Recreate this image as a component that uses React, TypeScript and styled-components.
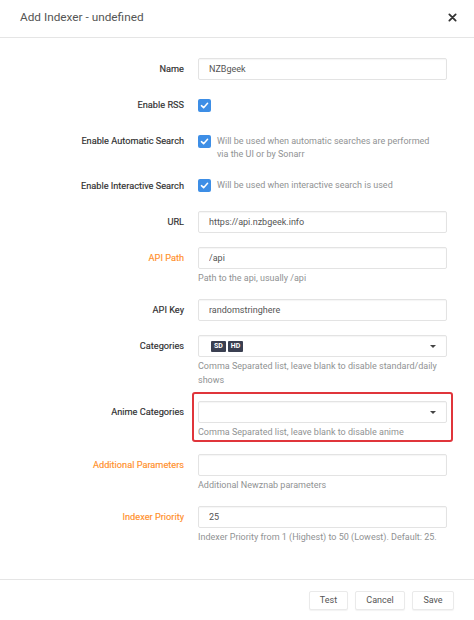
import React from "react";
import styled, { createGlobalStyle, css } from "styled-components";

const GlobalStyle = createGlobalStyle`
  html, body {
    margin: 0;
    padding: 0;
    background: #fff;
  }
  body {
    font-family: Roboto, "Open Sans", "Liberation Sans", sans-serif;
    -webkit-font-smoothing: antialiased;
  }
  * {
    box-sizing: border-box;
  }
`;

const Modal = styled.div`
  width: 474px;
  height: 620px;
  display: flex;
  flex-direction: column;
  background: #fff;
`;

const Header = styled.div`
  height: 38px;
  display: flex;
  align-items: center;
  justify-content: space-between;
  padding: 0 14px 3px 20px;
  border-bottom: 1px solid #e5e5e5;
`;

const Title = styled.h2`
  margin: 0;
  font-size: 11.8px;
  font-weight: 400;
  color: #555;
`;

const CloseButton = styled.button`
  width: 16px;
  height: 16px;
  padding: 0;
  border: none;
  background: none;
  display: flex;
  align-items: center;
  justify-content: center;
  cursor: pointer;
`;

const Body = styled.div`
  flex: 1;
  padding: 20px 27px 0 20px;
`;

const Group = styled.div`
  display: flex;
  align-items: flex-start;
  margin-bottom: 14px;
`;

const Label = styled.label<{ $advanced?: boolean }>`
  width: 164px;
  flex-shrink: 0;
  height: 22px;
  line-height: 22px;
  text-align: right;
  margin-right: 14px;
  font-size: 9.2px;
  font-weight: 400;
  color: ${(p) => (p.$advanced ? "#ff902b" : "#2f2f2f")};
  -webkit-text-stroke: 0.15px currentColor;
  white-space: nowrap;
`;

const Control = styled.div<{ $highlight?: boolean }>`
  flex: 1;
  position: relative;
  ${(p) =>
    p.$highlight &&
    css`
      &::after {
        content: "";
        position: absolute;
        top: -9px;
        left: -6px;
        right: -6px;
        bottom: -2px;
        border: 2px solid #e0353b;
        border-radius: 3px;
        pointer-events: none;
      }
    `}
`;

const inputBox = css`
  width: 100%;
  height: 22px;
  border: 1px solid #e3e3e3;
  border-radius: 2px;
  background: #fff;
  box-shadow: inset 0 1px 1px rgba(0, 0, 0, 0.04);
  font-family: inherit;
  font-size: 9px;
  color: #555;
`;

const TextInput = styled.input`
  ${inputBox};
  display: block;
  padding: 0 10px;
  outline: none;
`;

const SelectBox = styled.div`
  ${inputBox};
  display: flex;
  align-items: center;
  justify-content: space-between;
  padding: 0 10px 0 12px;
`;

const Tags = styled.div`
  display: flex;
  gap: 2px;
`;

const Tag = styled.span`
  height: 11px;
  padding: 0 3px;
  border-radius: 1px;
  background: #3a3f51;
  color: #fff;
  font-size: 7px;
  font-weight: 700;
  line-height: 11px;
`;

const Caret = styled.span`
  width: 0;
  height: 0;
  border-left: 3.5px solid transparent;
  border-right: 3.5px solid transparent;
  border-top: 3.5px solid #444;
`;

const Help = styled.div`
  margin-top: 3px;
  font-size: 9px;
  line-height: 13.5px;
  color: #909293;
`;

const CheckRow = styled.div`
  display: flex;
  align-items: flex-start;
`;

const CheckWrap = styled.div`
  height: 22px;
  display: flex;
  align-items: center;
  flex-shrink: 0;
`;

const CheckBox = styled.span`
  width: 13px;
  height: 13px;
  border-radius: 2px;
  background: #3d8ee6;
  display: flex;
  align-items: center;
  justify-content: center;
`;

const CheckHelp = styled.div`
  margin-left: 6px;
  padding-top: 4.5px;
  font-size: 9px;
  line-height: 13px;
  color: #909293;
  max-width: 222px;
`;

const Footer = styled.div`
  height: 41px;
  border-top: 1px solid #e5e5e5;
  display: flex;
  align-items: center;
  justify-content: flex-end;
  gap: 7px;
  padding: 0 20px 0 0;
`;

const Button = styled.button<{ $width: number }>`
  width: ${(p) => p.$width}px;
  height: 19px;
  padding: 0;
  border: 1px solid #eaeaea;
  border-radius: 2px;
  background: #fff;
  box-shadow: 0 1px 1px rgba(0, 0, 0, 0.05);
  font-family: inherit;
  font-size: 9px;
  color: #555;
  cursor: pointer;
`;

function Check() {
  return (
    <CheckBox>
      <svg width="9" height="9" viewBox="0 0 10 10">
        <path
          d="M1.6 5.2 L4 7.4 L8.4 2.6"
          fill="none"
          stroke="#fff"
          strokeWidth="1.7"
          strokeLinecap="round"
          strokeLinejoin="round"
        />
      </svg>
    </CheckBox>
  );
}

interface FieldProps {
  label: string;
  advanced?: boolean;
  help?: string;
  highlight?: boolean;
  children: React.ReactNode;
}

function Field({ label, advanced, help, highlight, children }: FieldProps) {
  return (
    <Group>
      <Label $advanced={advanced}>{label}</Label>
      <Control $highlight={highlight}>
        {children}
        {help && <Help>{help}</Help>}
      </Control>
    </Group>
  );
}

function CheckField({ label, help }: { label: string; help?: string }) {
  return (
    <Group>
      <Label>{label}</Label>
      <Control>
        <CheckRow>
          <CheckWrap>
            <Check />
          </CheckWrap>
          {help && <CheckHelp>{help}</CheckHelp>}
        </CheckRow>
      </Control>
    </Group>
  );
}

export default function App() {
  return (
    <>
      <GlobalStyle />
      <Modal>
        <Header>
          <Title>Add Indexer - undefined</Title>
          <CloseButton aria-label="Close">
            <svg width="9" height="9" viewBox="0 0 10 10">
              <path
                d="M1.5 1.5 L8.5 8.5 M8.5 1.5 L1.5 8.5"
                stroke="#333"
                strokeWidth="2"
                strokeLinecap="round"
              />
            </svg>
          </CloseButton>
        </Header>

        <Body>
          <Field label="Name">
            <TextInput defaultValue="NZBgeek" />
          </Field>

          <CheckField label="Enable RSS" />

          <CheckField
            label="Enable Automatic Search"
            help="Will be used when automatic searches are performed via the UI or by Sonarr"
          />

          <CheckField
            label="Enable Interactive Search"
            help="Will be used when interactive search is used"
          />

          <Field label="URL">
            <TextInput defaultValue="https://api.nzbgeek.info" />
          </Field>

          <Field label="API Path" advanced help="Path to the api, usually /api">
            <TextInput defaultValue="/api" />
          </Field>

          <Field label="API Key">
            <TextInput defaultValue="randomstringhere" />
          </Field>

          <Field
            label="Categories"
            help="Comma Separated list, leave blank to disable standard/daily shows"
          >
            <SelectBox>
              <Tags>
                <Tag>SD</Tag>
                <Tag>HD</Tag>
              </Tags>
              <Caret />
            </SelectBox>
          </Field>

          <Field
            label="Anime Categories"
            highlight
            help="Comma Separated list, leave blank to disable anime"
          >
            <SelectBox>
              <Tags />
              <Caret />
            </SelectBox>
          </Field>

          <Field
            label="Additional Parameters"
            advanced
            help="Additional Newznab parameters"
          >
            <TextInput defaultValue="" />
          </Field>

          <Field
            label="Indexer Priority"
            advanced
            help="Indexer Priority from 1 (Highest) to 50 (Lowest). Default: 25."
          >
            <TextInput defaultValue="25" />
          </Field>
        </Body>

        <Footer>
          <Button $width={39}>Test</Button>
          <Button $width={50}>Cancel</Button>
          <Button $width={42}>Save</Button>
        </Footer>
      </Modal>
    </>
  );
}
